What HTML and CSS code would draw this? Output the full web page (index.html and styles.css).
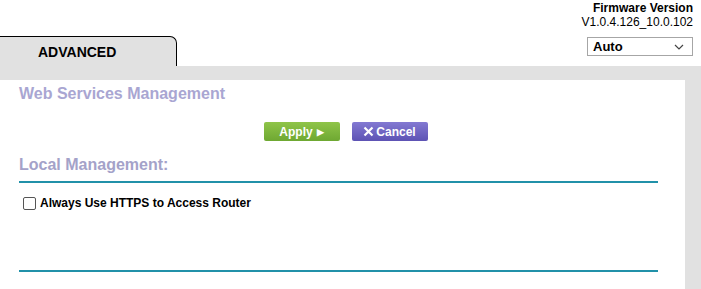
FILE: index.html
```html
<!DOCTYPE html>
<html lang="en">
<head>
  <meta charset="UTF-8">
  <title>Web Services Management</title>
  <link rel="stylesheet" href="styles.css">
</head>
<body>

  <div class="top">
    <div class="tab">ADVANCED</div>
    <div class="firmware">
      <div class="fw-title">Firmware Version</div>
      <div class="fw-num">V1.0.4.126_10.0.102</div>
      <div class="lang">
        <span>Auto</span>
        <svg width="10" height="6" viewBox="0 0 10 6"><path d="M1 1 L5 5 L9 1" fill="none" stroke="#444" stroke-width="1.2"/></svg>
      </div>
    </div>
  </div>

  <div class="band"></div>

  <div class="main">
    <div class="content">
      <h1 class="page-title">Web Services Management</h1>

      <div class="buttons">
        <button class="btn apply">Apply <span class="arrow">&#9654;</span></button>
        <button class="btn cancel"><svg width="11" height="11" viewBox="0 0 11 11"><path d="M1.5 1.5 L9.5 9.5 M9.5 1.5 L1.5 9.5" stroke="#fff" stroke-width="2.2"/></svg>Cancel</button>
      </div>

      <!-- Local Management -->
      <h2 class="section-title">Local Management:</h2>
      <div class="section">
        <label class="check"><span class="box"></span>Always Use HTTPS to Access Router</label>
      </div>
    </div>
    <div class="side"></div>
  </div>

</body>
</html>
```

FILE: styles.css
```css
body {
  margin: 0;
  padding: 0;
  font-family: "Liberation Sans", Arial, sans-serif;
  background-color: #fff;
  color: #000;
}

/* Header */
.top {
  display: flex;
  justify-content: space-between;
  height: 66px;
}

.tab {
  align-self: flex-end;
  width: 138px;
  height: 29px;
  padding-left: 38px;
  background-color: #e1e1e1;
  border-top: 1px solid #000;
  border-right: 1px solid #000;
  border-top-right-radius: 7px;
  font-size: 14px;
  font-weight: bold;
  line-height: 30px;
}

.firmware {
  text-align: right;
  padding-right: 8px;
  padding-top: 2px;
  font-size: 12px;
}

.fw-title {
  font-weight: bold;
  line-height: 13px;
}

.fw-num {
  line-height: 15px;
}

.lang {
  display: flex;
  justify-content: space-between;
  align-items: center;
  box-sizing: border-box;
  width: 106px;
  height: 19px;
  margin-top: 7px;
  margin-left: auto;
  padding: 0 8px 0 5px;
  border: 1px solid #a6a6a6;
  font-size: 13px;
  font-weight: bold;
  text-align: left;
}

.band {
  height: 14px;
  background-color: #e1e1e1;
}

/* Main area */
.main {
  display: flex;
  height: 209px;
}

.content {
  flex: 1;
  padding: 0 27px 0 19px;
}

.side {
  width: 16px;
  background-color: #e1e1e1;
}

.page-title {
  margin: 5px 0 0;
  font-size: 16px;
  line-height: 18px;
  color: #a9a6d2;
}

.buttons {
  display: flex;
  justify-content: center;
  gap: 12px;
  margin-top: 19px;
  padding-left: 14px;
}

.btn {
  display: flex;
  align-items: center;
  justify-content: center;
  width: 76px;
  height: 19px;
  padding: 0;
  border: none;
  border-radius: 2px;
  color: #fff;
  font-family: "Liberation Sans", Arial, sans-serif;
  font-size: 12px;
  font-weight: bold;
}

.apply {
  background: linear-gradient(#8fc449, #6ea832);
}

.arrow {
  font-size: 9px;
  margin-left: 4px;
}

.cancel {
  background: linear-gradient(#8379d2, #5d53b4);
}

.cancel svg {
  margin-right: 2px;
}

.section-title {
  margin: 14px 0 0;
  padding-bottom: 6px;
  border-bottom: 2px solid #2191a9;
  font-size: 16px;
  line-height: 20px;
  color: #a4a2c9;
}

.section {
  height: 74px;
  border-bottom: 2px solid #2191a9;
}

.check {
  display: flex;
  align-items: center;
  margin-top: 13px;
  padding-left: 4px;
  font-size: 12px;
  font-weight: bold;
}

.box {
  width: 11px;
  height: 11px;
  margin-right: 4px;
  border: 1px solid #555;
  border-radius: 2px;
  background-color: #fff;
}
```
